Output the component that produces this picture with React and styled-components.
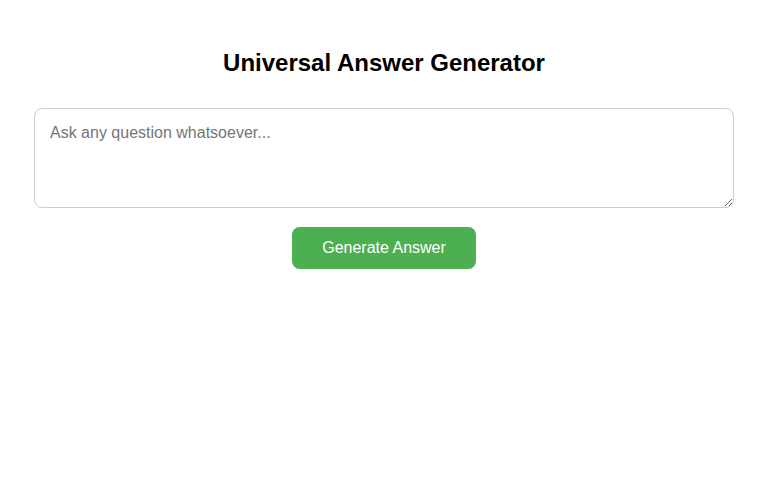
import React, { useState } from 'react'
import styled, { createGlobalStyle } from 'styled-components'

const GlobalStyle = createGlobalStyle`
  body {
    margin: 0;
    background: #ffffff;
    font-family: "Liberation Sans", Arial, sans-serif;
  }
`

const Page = styled.div`
  max-width: 700px;
  margin: 0 auto;
  padding-top: 49px;
  display: flex;
  flex-direction: column;
  align-items: center;
`

const Title = styled.h1`
  margin: 0 0 31px;
  font-size: 24px;
  line-height: 28px;
  font-weight: 700;
  color: #000;
`

const Question = styled.textarea`
  box-sizing: border-box;
  width: 100%;
  height: 100px;
  padding: 15px;
  border: 1px solid #ccc;
  border-radius: 8px;
  font-family: "Liberation Sans", Arial, sans-serif;
  font-size: 16px;
  line-height: 18px;
  color: #333;
  resize: vertical;
  outline: none;

  &::placeholder {
    color: #757575;
  }
`

const GenerateButton = styled.button`
  margin-top: 19px;
  padding: 12px 30px;
  border: none;
  border-radius: 8px;
  background: #4caf50;
  color: #fff;
  font-family: "Liberation Sans", Arial, sans-serif;
  font-size: 16px;
  line-height: 18px;
  cursor: pointer;

  &:hover {
    background: #45a049;
  }
`

export default function App() {
  const [question, setQuestion] = useState('')

  return (
    <>
      <GlobalStyle />
      <Page>
        <Title>Universal Answer Generator</Title>
        <Question
          placeholder="Ask any question whatsoever..."
          value={question}
          onChange={(e) => setQuestion(e.target.value)}
        />
        <GenerateButton>Generate Answer</GenerateButton>
      </Page>
    </>
  )
}
